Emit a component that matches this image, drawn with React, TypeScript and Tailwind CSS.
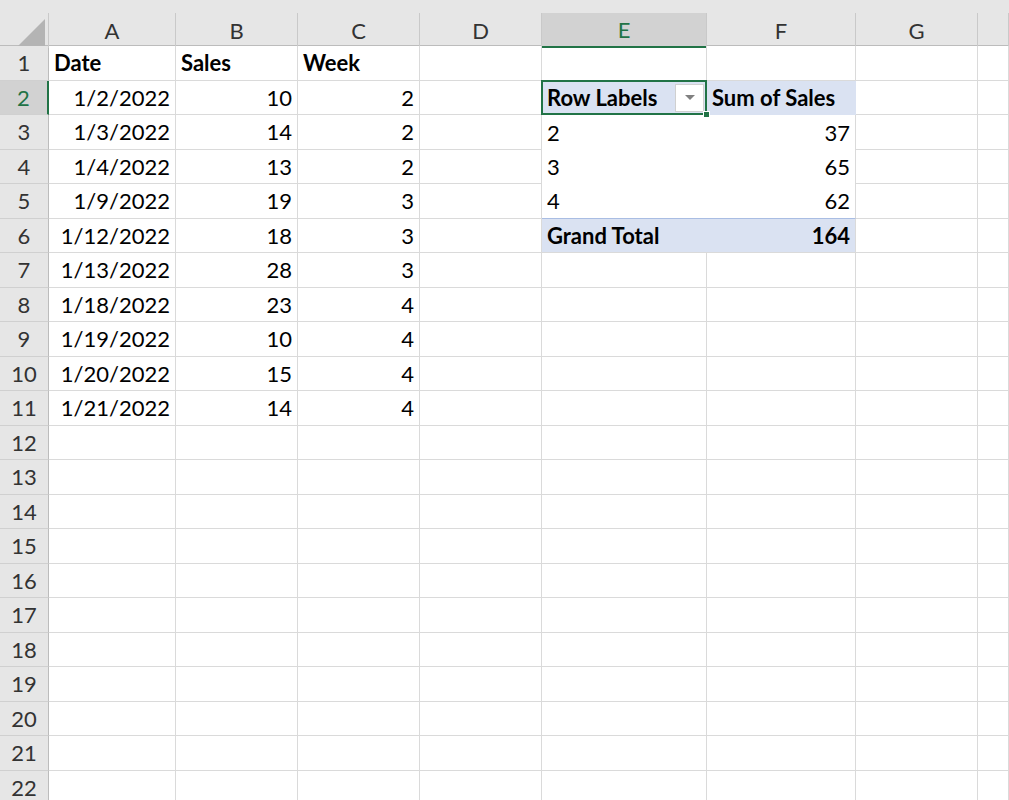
import React from "react";

const COLS = ["A", "B", "C", "D", "E", "F", "G", ""];
const GRID = "grid grid-cols-[49px_127px_122px_122px_122px_165px_149px_122px_1fr]";

type Row = { a?: string; b?: string; c?: string };

const DATA: Row[] = [
  { a: "1/2/2022", b: "10", c: "2" },
  { a: "1/3/2022", b: "14", c: "2" },
  { a: "1/4/2022", b: "13", c: "2" },
  { a: "1/9/2022", b: "19", c: "3" },
  { a: "1/12/2022", b: "18", c: "3" },
  { a: "1/13/2022", b: "28", c: "3" },
  { a: "1/18/2022", b: "23", c: "4" },
  { a: "1/19/2022", b: "10", c: "4" },
  { a: "1/20/2022", b: "15", c: "4" },
  { a: "1/21/2022", b: "14", c: "4" },
];

const PIVOT: Record<number, [string, string]> = {
  3: ["2", "37"],
  4: ["3", "65"],
  5: ["4", "62"],
};

function Cell({
  children,
  className = "",
}: {
  children?: React.ReactNode;
  className?: string;
}) {
  return (
    <div
      className={
        "flex items-center overflow-hidden whitespace-nowrap px-[5px] border-r border-b border-[#dadada] " +
        className
      }
    >
      {children}
    </div>
  );
}

export default function App() {
  const rows = Array.from({ length: 22 }, (_, i) => i + 1);

  return (
    <div
      className="w-[1009px] h-[800px] overflow-hidden bg-white text-[22px] text-black"
      style={{ fontFamily: "Lato, 'Open Sans', sans-serif" }}
    >
      {/* top band */}
      <div className="h-[13px] bg-[#e6e6e6]" />

      {/* column headers */}
      <div className={GRID + " h-[33px] bg-[#e6e6e6] border-b border-[#bcbcbc]"}>
        <div className="relative border-r border-[#c9c9c9]">
          <div className="absolute right-[3px] bottom-[2px] w-0 h-0 border-l-[27px] border-l-transparent border-b-[27px] border-b-[#b4b4b4]" />
        </div>
        {COLS.map((c) => (
          <div
            key={c || "h"}
            className={
              "flex items-center justify-center border-r border-[#c9c9c9] " +
              (c === "E"
                ? "bg-[#d2d2d2] text-[#217346] border-b-2 border-b-[#217346]"
                : "text-[#333]")
            }
          >
            {c}
          </div>
        ))}
      </div>

      {/* body */}
      {rows.map((r) => {
        const d = r >= 2 && r <= 11 ? DATA[r - 2] : undefined;
        const pivot = PIVOT[r];
        return (
          <div key={r} className={GRID + " h-[34.5px]"}>
            <div
              className={
                "flex items-center justify-center border-b border-[#d0d0d0] " +
                (r === 2
                  ? "bg-[#d2d2d2] text-[#217346] border-r-2 border-r-[#217346]"
                  : "bg-[#e6e6e6] text-[#333] border-r border-r-[#bcbcbc]")
              }
            >
              {r}
            </div>

            {r === 1 ? (
              <>
                <Cell className="font-bold">Date</Cell>
                <Cell className="font-bold">Sales</Cell>
                <Cell className="font-bold">Week</Cell>
              </>
            ) : (
              <>
                <Cell className="justify-end">{d?.a}</Cell>
                <Cell className="justify-end">{d?.b}</Cell>
                <Cell className="justify-end">{d?.c}</Cell>
              </>
            )}
            <Cell />

            {r === 2 ? (
              <>
                <div className="relative flex items-center px-[5px] bg-[#dae2f2] font-bold border-r border-b border-[#dae2f2]">
                  Row Labels
                  <div className="absolute right-[2px] top-[3px] bottom-[2px] w-[29px] bg-white border border-[#d0d0d0] flex items-center justify-center">
                    <div className="w-0 h-0 border-l-[5px] border-r-[5px] border-t-[5px] border-l-transparent border-r-transparent border-t-[#808080]" />
                  </div>
                  <div className="absolute -left-px -top-px -right-px -bottom-px border-2 border-[#217346]" />
                  <div className="absolute -right-[4px] -bottom-[4px] w-[7px] h-[7px] bg-[#217346] border border-white" />
                </div>
                <Cell className="font-bold bg-[#dae2f2] border-[#dae2f2]">Sum of Sales</Cell>
              </>
            ) : pivot ? (
              <>
                <div
                  className={
                    "flex items-center px-[5px] bg-white " +
                    (r === 5 ? "border-b border-[#a9bde3]" : "")
                  }
                >
                  {pivot[0]}
                </div>
                <div
                  className={
                    "flex items-center justify-end px-[5px] bg-white border-r border-[#dadada] " +
                    (r === 5 ? "border-b border-b-[#a9bde3]" : "")
                  }
                >
                  {pivot[1]}
                </div>
              </>
            ) : r === 6 ? (
              <>
                <div className="flex items-center px-[5px] bg-[#dae2f2] font-bold border-b border-[#dadada]">
                  Grand Total
                </div>
                <Cell className="justify-end font-bold bg-[#dae2f2]">164</Cell>
              </>
            ) : (
              <>
                <Cell />
                <Cell />
              </>
            )}

            <Cell />
            <Cell />
          </div>
        );
      })}
    </div>
  );
}
